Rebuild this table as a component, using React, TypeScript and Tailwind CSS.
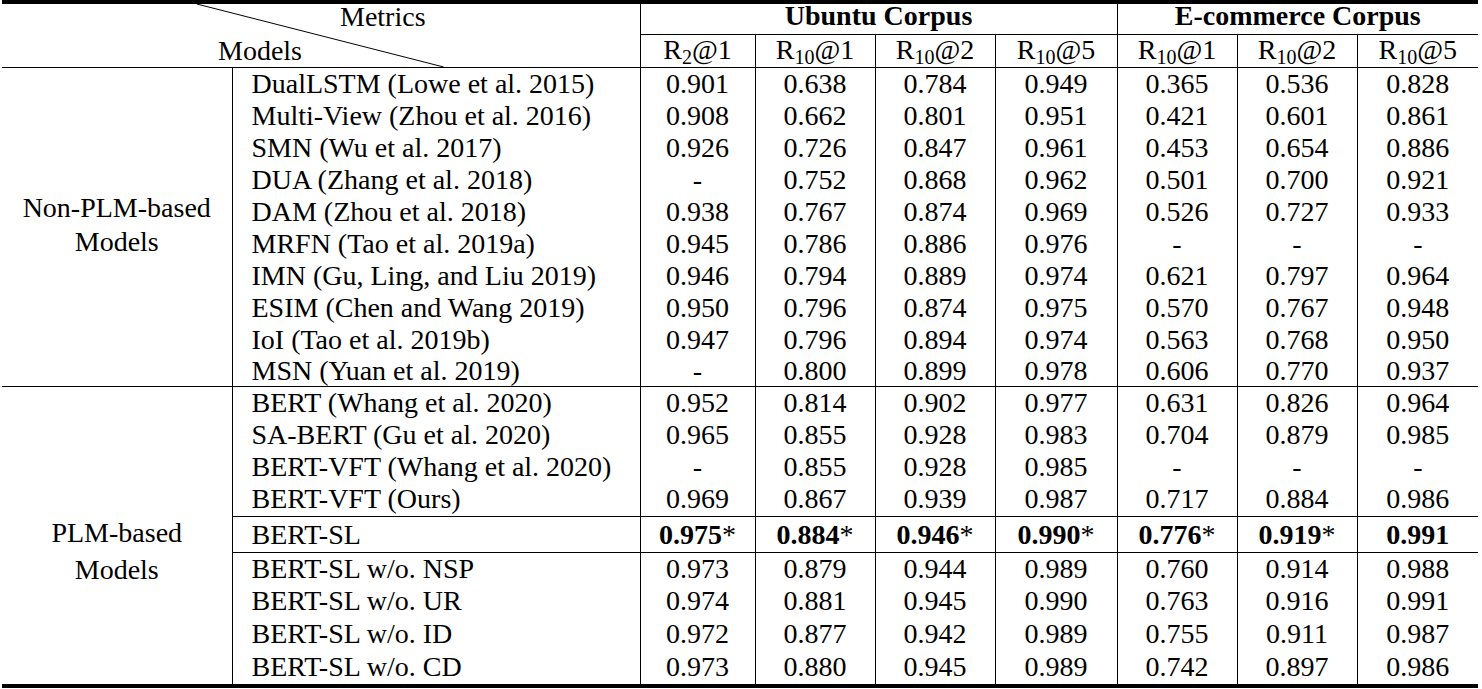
import React from "react";

type Row = string[];

const nonPlm: Row[] = [
  ["DualLSTM (Lowe et al. 2015)", "0.901", "0.638", "0.784", "0.949", "0.365", "0.536", "0.828"],
  ["Multi-View (Zhou et al. 2016)", "0.908", "0.662", "0.801", "0.951", "0.421", "0.601", "0.861"],
  ["SMN (Wu et al. 2017)", "0.926", "0.726", "0.847", "0.961", "0.453", "0.654", "0.886"],
  ["DUA (Zhang et al. 2018)", "-", "0.752", "0.868", "0.962", "0.501", "0.700", "0.921"],
  ["DAM (Zhou et al. 2018)", "0.938", "0.767", "0.874", "0.969", "0.526", "0.727", "0.933"],
  ["MRFN (Tao et al. 2019a)", "0.945", "0.786", "0.886", "0.976", "-", "-", "-"],
  ["IMN (Gu, Ling, and Liu 2019)", "0.946", "0.794", "0.889", "0.974", "0.621", "0.797", "0.964"],
  ["ESIM (Chen and Wang 2019)", "0.950", "0.796", "0.874", "0.975", "0.570", "0.767", "0.948"],
  ["IoI (Tao et al. 2019b)", "0.947", "0.796", "0.894", "0.974", "0.563", "0.768", "0.950"],
  ["MSN (Yuan et al. 2019)", "-", "0.800", "0.899", "0.978", "0.606", "0.770", "0.937"],
];
const nonPlmH = ["h-[32px]", "h-[32px]", "h-[32px]", "h-[32px]", "h-[32px]", "h-[32px]", "h-[32px]", "h-[32px]", "h-[32px]", "h-[31px]"];

const plm1: Row[] = [
  ["BERT (Whang et al. 2020)", "0.952", "0.814", "0.902", "0.977", "0.631", "0.826", "0.964"],
  ["SA-BERT (Gu et al. 2020)", "0.965", "0.855", "0.928", "0.983", "0.704", "0.879", "0.985"],
  ["BERT-VFT (Whang et al. 2020)", "-", "0.855", "0.928", "0.985", "-", "-", "-"],
  ["BERT-VFT (Ours)", "0.969", "0.867", "0.939", "0.987", "0.717", "0.884", "0.986"],
];
const plm1H = ["h-[32px]", "h-[32px]", "h-[32px]", "h-[34px]"];

const bold = [
  ["0.975", "*"],
  ["0.884", "*"],
  ["0.946", "*"],
  ["0.990", "*"],
  ["0.776", "*"],
  ["0.919", "*"],
  ["0.991", ""],
];

const plm2: Row[] = [
  ["BERT-SL w/o. NSP", "0.973", "0.879", "0.944", "0.989", "0.760", "0.914", "0.988"],
  ["BERT-SL w/o. UR", "0.974", "0.881", "0.945", "0.990", "0.763", "0.916", "0.991"],
  ["BERT-SL w/o. ID", "0.972", "0.877", "0.942", "0.989", "0.755", "0.911", "0.987"],
  ["BERT-SL w/o. CD", "0.973", "0.880", "0.945", "0.989", "0.742", "0.897", "0.986"],
];
const plm2H = ["h-[32px]", "h-[33px]", "h-[32px]", "h-[34px]"];

function DataRow({ row, h, last, group }: { row: Row; h: string; last?: boolean; group?: React.ReactNode }) {
  const b = last ? " border-b border-black" : "";
  return (
    <tr>
      {group}
      <td className={"p-0 pl-[19px] text-left whitespace-nowrap border-r border-black " + h + b}>{row[0]}</td>
      {row.slice(1).map((v, i) => (
        <td
          key={i}
          className={"p-0 text-center " + (i < 6 ? "border-r border-black " : "") + h + b}
        >
          {v}
        </td>
      ))}
    </tr>
  );
}

function Metric({ sub, at }: { sub: string; at: string }) {
  return (
    <span className="inline-block leading-[26px]">
      R<sub className="text-[20px] leading-none">{sub}</sub>@{at}
    </span>
  );
}

export default function App() {
  return (
    <div className="w-[1482px] h-[689px] bg-white overflow-hidden">
      <div className="ml-[2px] w-[1476px] border-t-[4px] border-b-[4px] border-black font-['Liberation_Serif',_'Times_New_Roman',_serif] text-[28px] leading-[26px] text-black">
        <table className="table-fixed border-collapse w-[1476px]">
          <colgroup>
            <col className="w-[230px]" />
            <col className="w-[408px]" />
            <col className="w-[115px]" />
            <col className="w-[120px]" />
            <col className="w-[120px]" />
            <col className="w-[122px]" />
            <col className="w-[120px]" />
            <col className="w-[120px]" />
            <col className="w-[121px]" />
          </colgroup>
          <thead>
            <tr>
              <th colSpan={2} rowSpan={2} className="relative p-0 font-normal border-r border-b border-black">
                <svg className="absolute inset-0 w-full h-full" preserveAspectRatio="none" viewBox="0 0 638 63">
                  <line x1="195" y1="0" x2="442" y2="63" stroke="black" strokeWidth="1" />
                </svg>
                <div className="relative flex flex-col text-left">
                  <span className="pl-[338px] h-[30px] leading-[26px]">Metrics</span>
                  <span className="pl-[216px] h-[33px] leading-[33px]">Models</span>
                </div>
              </th>
              <th colSpan={4} className="p-0 pb-[6px] h-[30px] leading-[24px] font-bold text-center border-r border-b border-black">
                Ubuntu Corpus
              </th>
              <th colSpan={3} className="p-0 pb-[6px] h-[30px] leading-[24px] font-bold text-center border-b border-black">
                E-commerce Corpus
              </th>
            </tr>
            <tr>
              <th className="p-0 pb-[2px] h-[33px] font-normal text-center border-r border-b border-black"><Metric sub="2" at="1" /></th>
              <th className="p-0 pb-[2px] h-[33px] font-normal text-center border-r border-b border-black"><Metric sub="10" at="1" /></th>
              <th className="p-0 pb-[2px] h-[33px] font-normal text-center border-r border-b border-black"><Metric sub="10" at="2" /></th>
              <th className="p-0 pb-[2px] h-[33px] font-normal text-center border-r border-b border-black"><Metric sub="10" at="5" /></th>
              <th className="p-0 pb-[2px] h-[33px] font-normal text-center border-r border-b border-black"><Metric sub="10" at="1" /></th>
              <th className="p-0 pb-[2px] h-[33px] font-normal text-center border-r border-b border-black"><Metric sub="10" at="2" /></th>
              <th className="p-0 pb-[2px] h-[33px] font-normal text-center border-b border-black"><Metric sub="10" at="5" /></th>
            </tr>
          </thead>
          <tbody>
            {nonPlm.map((r, i) => (
              <DataRow
                key={"a" + i}
                row={r}
                h={nonPlmH[i]}
                last={i === nonPlm.length - 1}
                group={
                  i === 0 ? (
                    <td rowSpan={10} className="p-0 pt-[123px] align-top text-center leading-[34px] border-r border-b border-black">
                      Non-PLM-based
                      <br />
                      Models
                    </td>
                  ) : undefined
                }
              />
            ))}
            {plm1.map((r, i) => (
              <DataRow
                key={"b" + i}
                row={r}
                h={plm1H[i]}
                last={i === plm1.length - 1}
                group={
                  i === 0 ? (
                    <td rowSpan={9} className="p-0 pt-[127px] align-top text-center leading-[37px] border-r border-black">
                      PLM-based
                      <br />
                      Models
                    </td>
                  ) : undefined
                }
              />
            ))}
            <tr>
              <td className="p-0 pl-[19px] h-[36px] text-left border-r border-b border-black">BERT-SL</td>
              {bold.map(([v, s], i) => (
                <td key={i} className={"p-0 h-[36px] text-center border-b border-black " + (i < 6 ? "border-r" : "")}>
                  <span className="font-bold">{v}</span>
                  {s}
                </td>
              ))}
            </tr>
            {plm2.map((r, i) => (
              <DataRow key={"c" + i} row={r} h={plm2H[i]} />
            ))}
          </tbody>
        </table>
      </div>
    </div>
  );
}
